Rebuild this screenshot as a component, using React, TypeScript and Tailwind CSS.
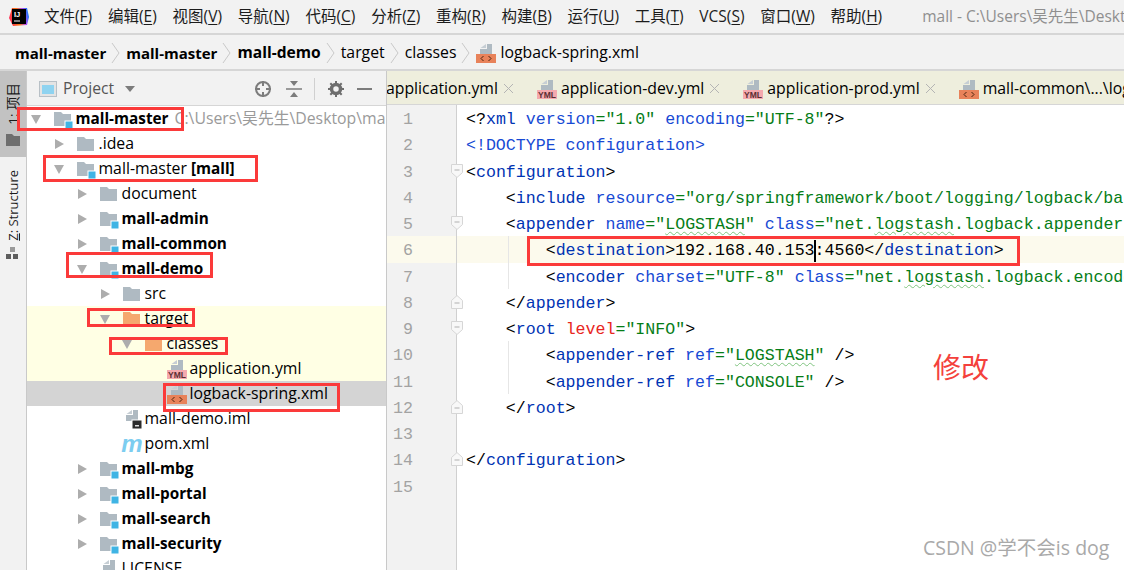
import type { ReactNode } from "react";

const ui = "font-['Open_Sans','Noto_Sans_CJK_SC',sans-serif]";
const mono = "font-['Liberation_Mono',monospace]";

const menus = [
  ["文件", "F"],
  ["编辑", "E"],
  ["视图", "V"],
  ["导航", "N"],
  ["代码", "C"],
  ["分析", "Z"],
  ["重构", "R"],
  ["构建", "B"],
  ["运行", "U"],
  ["工具", "T"],
  ["VCS", "S"],
  ["窗口", "W"],
  ["帮助", "H"],
];

const Chevron = () => (
  <svg width="10" height="22" viewBox="0 0 10 22" className="mx-[5px]">
    <path d="M1 1l7 10-7 10" fill="none" stroke="#c9c9c9" />
  </svg>
);

const Folder = ({ color = "#afbac2", module }: { color?: string; module?: boolean }) => (
  <svg width="20" height="20" viewBox="0 0 20 20">
    <path d="M1 3h7l2 2h8v12H1z" fill={color} />
    {module && <rect x="12" y="12" width="8" height="8" fill="#3fb4e4" stroke="#fff" />}
  </svg>
);

const FileBase = ({ children }: { children?: ReactNode }) => (
  <svg width="20" height="20" viewBox="0 0 20 20">
    <path d="M11 1h5v11H4V6h7z" fill="#afbac2" />
    <path d="M4.5 5l5.5-4v4z" fill="#c6ced4" />
    {children}
  </svg>
);

const YmlIcon = () => (
  <FileBase>
    <rect x="0" y="11" width="20" height="9" fill="#f4a9ae" />
    <text x="10" y="18.7" textAnchor="middle" fontSize="8.5" fontWeight="700" fontFamily="Liberation Sans" fill="#5c2f33">
      YML
    </text>
  </FileBase>
);

const XmlIcon = () => (
  <FileBase>
    <rect x="0" y="11" width="20" height="9" fill="#e8825a" />
    <path d="M7.5 13l-2.5 2.5 2.5 2.5M12.5 13l2.5 2.5-2.5 2.5" fill="none" stroke="#4a2410" />
  </FileBase>
);

const ImlIcon = () => (
  <FileBase>
    <rect x="10" y="11" width="10" height="9" fill="#2b2b2b" stroke="#fff" />
    <rect x="13" y="16" width="4" height="1.5" fill="#ddd" />
  </FileBase>
);

const PomIcon = () => (
  <span className="flex h-5 w-5 items-center justify-center font-['Liberation_Sans',sans-serif] text-[24px] font-bold italic leading-none text-[#7ccdf0]">
    m
  </span>
);

const Arrow = ({ open }: { open?: boolean }) => (
  <svg width="12" height="12" viewBox="0 0 12 12">
    <path d={open ? "M1 2h10l-5 9z" : "M2 1l9 5-9 5z"} fill="#adadad" />
  </svg>
);

const CloseX = () => (
  <svg width="11" height="11" viewBox="0 0 11 11" className="ml-[5px] shrink-0">
    <path d="M1 1l9 9M10 1l-9 9" stroke="#b4b4b4" />
  </svg>
);

type Row = {
  depth: number;
  icon: ReactNode;
  label: string;
  bold?: boolean;
  open?: boolean;
  leaf?: boolean;
  extra?: ReactNode;
  bg?: string;
};

const mod = <Folder module />;

const rows: Row[] = [
  {
    depth: 0,
    icon: mod,
    label: "mall-master",
    bold: true,
    open: true,
    extra: <span className="ml-[6px] text-[#9a9a9a]">C:\Users\吴先生\Desktop\mall</span>,
  },
  { depth: 1, icon: <Folder />, label: ".idea" },
  {
    depth: 1,
    icon: mod,
    label: "mall-master ",
    open: true,
    extra: <span className="text-[15.3px] font-bold">[mall]</span>,
  },
  { depth: 2, icon: <Folder />, label: "document" },
  { depth: 2, icon: mod, label: "mall-admin", bold: true },
  { depth: 2, icon: mod, label: "mall-common", bold: true },
  { depth: 2, icon: mod, label: "mall-demo", bold: true, open: true },
  { depth: 3, icon: <Folder />, label: "src" },
  { depth: 3, icon: <Folder color="#f5a86e" />, label: "target", open: true, bg: "bg-[#ffffe4]" },
  { depth: 4, icon: <Folder color="#f5a86e" />, label: "classes", open: true, bg: "bg-[#ffffe4]" },
  { depth: 5, icon: <YmlIcon />, label: "application.yml", leaf: true, bg: "bg-[#ffffe4]" },
  { depth: 5, icon: <XmlIcon />, label: "logback-spring.xml", leaf: true, bg: "bg-[#d4d4d4]" },
  { depth: 3, icon: <ImlIcon />, label: "mall-demo.iml", leaf: true },
  { depth: 3, icon: <PomIcon />, label: "pom.xml", leaf: true },
  { depth: 2, icon: mod, label: "mall-mbg", bold: true },
  { depth: 2, icon: mod, label: "mall-portal", bold: true },
  { depth: 2, icon: mod, label: "mall-search", bold: true },
  { depth: 2, icon: mod, label: "mall-security", bold: true },
  { depth: 2, icon: <FileBase />, label: "LICENSE", leaf: true },
];

const depthPad = ["pl-[3px]", "pl-[26px]", "pl-[49px]", "pl-[72px]", "pl-[94px]", "pl-[117px]"];

const TreeRow = ({ row }: { row: Row }) => (
  <div className={`flex h-[25px] shrink-0 items-center whitespace-pre text-[15.8px] text-black ${depthPad[row.depth]} ${row.bg ?? ""}`}>
    <span className={`flex w-[23px] shrink-0 justify-start ${row.leaf ? "invisible" : ""}`}>
      <Arrow open={row.open} />
    </span>
    <span className="mr-[2.5px] flex w-[20px] shrink-0 justify-center">{row.icon}</span>
    <span className={row.bold ? "text-[15.3px] font-bold" : ""}>{row.label}</span>
    {row.extra}
  </div>
);

const tabs: { label: string; icon?: ReactNode }[] = [
  { label: "application.yml" },
  { label: "application-dev.yml", icon: <YmlIcon /> },
  { label: "application-prod.yml", icon: <YmlIcon /> },
  { label: "mall-common\\...\\logback-spring.xml", icon: <XmlIcon /> },
];

const tag = "text-[#0033b3]";
const k = "text-[#174ad4]"; // attribute names
const s = "text-[#067d17]"; // attribute values

const T = ({ c, children }: { c?: string; children: ReactNode }) => <span className={c}>{children}</span>;

const Wavy = ({ children }: { children: ReactNode }) => (
  <span className="underline decoration-[#7fc47f] decoration-wavy decoration-1 underline-offset-2">{children}</span>
);

const code: { node?: ReactNode; fold?: "open" | "close"; active?: boolean; guide?: boolean }[] = [
  {
    node: (
      <>
        &lt;?<T c={tag}>xml</T> <T c={k}>version</T>
        <T c={s}>="1.0"</T> <T c={k}>encoding</T>
        <T c={s}>="UTF-8"</T>?&gt;
      </>
    ),
  },
  {
    node: (
      <>
        <T c={k}>&lt;!DOCTYPE configuration&gt;</T>
      </>
    ),
  },
  { fold: "open", node: <>&lt;<T c={tag}>configuration</T>&gt;</> },
  {
    node: (
      <>
        {"    "}&lt;<T c={tag}>include</T> <T c={k}>resource</T>
        <T c={s}>="org/springframework/boot/logging/logback/base.xml"</T>
      </>
    ),
  },
  {
    fold: "open",
    node: (
      <>
        {"    "}&lt;<T c={tag}>appender</T> <T c={k}>name</T>
        <T c={s}>
          ="<Wavy>LOGSTASH</Wavy>"
        </T>{" "}
        <T c={k}>class</T>
        <T c={s}>
          ="net.<Wavy>logstash</Wavy>.logback.appender.LogstashTcpSocketAppender"
        </T>
      </>
    ),
  },
  {
    active: true,
    guide: true,
    node: (
      <>
        {"        "}&lt;<T c={tag}>destination</T>&gt;192.168.40.153
        <span className="relative">
          <span className="absolute -left-px top-[-1px] h-[22px] w-[2px] bg-black" />
        </span>
        :4560&lt;/<T c={tag}>destination</T>&gt;
      </>
    ),
  },
  {
    guide: true,
    node: (
      <>
        {"        "}&lt;<T c={tag}>encoder</T> <T c={k}>charset</T>
        <T c={s}>="UTF-8"</T> <T c={k}>class</T>
        <T c={s}>
          ="net.<Wavy>logstash</Wavy>.logback.encoder.LogstashEncoder"
        </T>
      </>
    ),
  },
  { fold: "close", node: <>{"    "}&lt;/<T c={tag}>appender</T>&gt;</> },
  {
    fold: "open",
    node: (
      <>
        {"    "}&lt;<T c={tag}>root</T> <T c="text-[#e8261e]">level</T>
        <T c={s}>="INFO"</T>&gt;
      </>
    ),
  },
  {
    guide: true,
    node: (
      <>
        {"        "}&lt;<T c={tag}>appender-ref</T> <T c={k}>ref</T>
        <T c={s}>
          ="<Wavy>LOGSTASH</Wavy>"
        </T>{" "}
        /&gt;
      </>
    ),
  },
  {
    guide: true,
    node: (
      <>
        {"        "}&lt;<T c={tag}>appender-ref</T> <T c={k}>ref</T>
        <T c={s}>="CONSOLE"</T> /&gt;
      </>
    ),
  },
  { fold: "close", node: <>{"    "}&lt;/<T c={tag}>root</T>&gt;</> },
  {},
  { fold: "close", node: <>&lt;/<T c={tag}>configuration</T>&gt;</> },
  {},
];

const Fold = ({ dir }: { dir: "open" | "close" }) => (
  <svg width="12" height="14" viewBox="0 0 12 14" className="absolute -right-[7px] top-[6px]">
    <path d={dir === "open" ? "M.5.5h11v8l-5.5 5-5.5-5z" : "M.5 13.5h11v-8l-5.5-5-5.5 5z"} fill="#f8f8f8" stroke="#d6d6d6" />
    <path d={dir === "open" ? "M3.5 6h5" : "M3.5 8h5"} stroke="#b0b0b0" />
  </svg>
);

const boxes = [
  "left-[17px] top-[107px] h-[24px] w-[167px]",
  "left-[43px] top-[155px] h-[27px] w-[215px]",
  "left-[66px] top-[252px] h-[26px] w-[147px]",
  "left-[87px] top-[308px] h-[19px] w-[108px]",
  "left-[109px] top-[337px] h-[18px] w-[119px]",
  "left-[163px] top-[383px] h-[29px] w-[177px]",
  "left-[527px] top-[236px] h-[30px] w-[493px]",
];

export default function App() {
  return (
    <div className={`relative flex h-[570px] w-[1124px] flex-col overflow-hidden bg-white ${ui}`}>
      {/* menu bar */}
      <div className="flex h-[35px] shrink-0 items-center border-b-2 border-[#d6d6d6] bg-[#f2f2f2] text-[15.5px] text-[#1c1c1c]">
        <svg width="20" height="19" viewBox="0 0 20 19" className="ml-[9px] mr-[15px] shrink-0">
          <defs>
            <linearGradient id="logo" x1="0" y1="0.6" x2="1" y2="0.4">
              <stop offset="0" stopColor="#fe2857" />
              <stop offset="0.45" stopColor="#f97a12" />
              <stop offset="0.75" stopColor="#b74af7" />
              <stop offset="1" stopColor="#087cfa" />
            </linearGradient>
          </defs>
          <path d="M3 1l15 0 2 9-2 8-14 1-4-8z" fill="url(#logo)" />
          <rect x="3" y="2" width="14" height="15" fill="#000" />
          <text x="5" y="10" fontSize="7.5" fontWeight="700" fontFamily="Liberation Sans" fill="#fff">
            IJ
          </text>
          <rect x="5" y="13.5" width="6" height="1" fill="#fff" />
        </svg>
        <div className="flex gap-[15.8px] whitespace-nowrap">
          {menus.map(([name, key]) => (
            <span key={key}>
              {name}(<span className="underline underline-offset-2">{key}</span>)
            </span>
          ))}
        </div>
        <span className="ml-[40px] whitespace-nowrap text-[#8f8f8f]">mall - C:\Users\吴先生\Desktop\mall</span>
      </div>

      {/* breadcrumb */}
      <div className="flex h-[36px] shrink-0 items-center whitespace-nowrap border-b-2 border-[#d6d6d6] bg-[#f2f2f2] pl-[15px] pt-[2px] text-[15.8px] text-black">
        <span className="text-[15px] font-bold">mall-master</span>
        <Chevron />
        <span className="text-[15px] font-bold">mall-master</span>
        <Chevron />
        <span className="text-[15.6px] font-bold">mall-demo</span>
        <Chevron />
        <span>target</span>
        <Chevron />
        <span>classes</span>
        <Chevron />
        <span className="flex">
          <XmlIcon />
        </span>
        <span className="ml-[4px]">logback-spring.xml</span>
      </div>

      <div className="flex min-h-0 flex-1">
        {/* left tool strip */}
        <div className="flex w-[27px] shrink-0 flex-col items-center border-r border-[#c9c9c9] bg-[#f2f2f2] text-[#1c1c1c]">
          <div className="flex h-[86px] w-full shrink-0 flex-col items-center bg-[#c2c2c2]">
            <span className="mt-[12px] rotate-180 whitespace-nowrap text-[13.5px] leading-[26px] [text-orientation:sideways] [writing-mode:vertical-rl]">
              <span className="underline">1</span>: 项目
            </span>
            <svg width="16" height="14" viewBox="0 0 16 14" className="mt-[8px]">
              <path d="M1 1h6l2 2h6v10H1z" fill="#6e6e6e" />
            </svg>
          </div>
          <span className="mt-[13px] rotate-180 whitespace-nowrap text-[13px] leading-[26px] [text-orientation:sideways] [writing-mode:vertical-rl]">
            <span className="underline">Z</span>: Structure
          </span>
          <svg width="14" height="13" viewBox="0 0 14 13" className="mt-[6px]">
            <rect x="4" y="0" width="5" height="5" fill="#9a9a9a" />
            <rect x="0" y="7" width="5" height="5" fill="#5e5e5e" />
            <rect x="7" y="7" width="5" height="5" fill="#5e5e5e" />
          </svg>
        </div>

        {/* project tree */}
        <div className="flex w-[360px] shrink-0 flex-col overflow-hidden border-r border-[#c9c9c9]">
          <div className="flex h-[35px] shrink-0 items-center border-b border-[#d6d6d6] bg-[#f2f2f2] pt-[1px] text-[15.7px] text-[#555]">
            <svg width="18" height="18" viewBox="0 0 18 18" className="ml-[12px]">
              <rect x="0.5" y="1.5" width="17" height="15" fill="#e4e4e4" stroke="#b8c0c6" />
              <rect x="3" y="5" width="12" height="9" fill="#8fd3f0" />
            </svg>
            <span className="ml-[6px]">Project</span>
            <svg width="12" height="8" viewBox="0 0 12 8" className="ml-[10px]">
              <path d="M1 1h10l-5 6z" fill="#7c7c7c" />
            </svg>
            <svg width="18" height="18" viewBox="0 0 18 18" className="ml-[118px]">
              <circle cx="9" cy="9" r="7" fill="none" stroke="#7c7c7c" strokeWidth="2" />
              <path d="M9 1v5M9 12v5M1 9h5M12 9h5" stroke="#7c7c7c" strokeWidth="2" />
            </svg>
            <svg width="16" height="16" viewBox="0 0 16 16" className="ml-[14px]">
              <path d="M0 8h16" stroke="#7c7c7c" strokeWidth="1.5" />
              <path d="M4 0h8L8 5zM4 16h8l-4-5z" fill="#7c7c7c" />
            </svg>
            <span className="ml-[12px] h-[22px] w-px bg-[#d0d0d0]" />
            <svg width="16" height="16" viewBox="0 0 16 16" className="ml-[13px]">
              <circle cx="8" cy="8" r="4.5" fill="none" stroke="#6e6e6e" strokeWidth="3.5" />
              <path d="M8 0v3M8 13v3M0 8h3M13 8h3M2.3 2.3l2 2M11.7 11.7l2 2M13.7 2.3l-2 2M4.3 11.7l-2 2" stroke="#6e6e6e" strokeWidth="2" />
            </svg>
            <span className="ml-[13px] h-[2px] w-[15px] bg-[#7c7c7c]" />
          </div>
          {rows.map((row, i) => (
            <TreeRow key={i} row={row} />
          ))}
        </div>

        {/* editor */}
        <div className="flex min-w-0 flex-1 flex-col overflow-hidden">
          <div className="flex h-[34px] shrink-0 items-center whitespace-nowrap border-b border-[#d6d6d6] bg-[#eeeedd] pt-[2px] text-[15.8px] text-black">
            {tabs.map((tab) => (
              <div key={tab.label} className="flex shrink-0 items-center pr-[10px]">
                {tab.icon && <span className="ml-[13px] mr-[4px] flex">{tab.icon}</span>}
                <span className={tab.icon ? "" : "-ml-px"}>{tab.label}</span>
                <CloseX />
              </div>
            ))}
          </div>
          <div className={`relative flex-1 text-[16.6px] text-black ${mono}`}>
            {code.map((line, i) => (
              <div key={i} className={`relative flex h-[26.25px] whitespace-pre leading-[30px] ${line.active ? "bg-[#fcfaed]" : ""}`}>
                <div className={`relative w-[70px] shrink-0 border-r border-[#d0d0d0] pr-[43px] text-right text-[#a3a3a3] ${line.active ? "bg-[#fcfaed]" : "bg-[#f2f2f2]"}`}>
                  {i + 1}
                  {line.fold && <Fold dir={line.fold} />}
                </div>
                {line.guide && <span className="absolute left-[121px] top-0 h-full w-px bg-[#e6e6e6]" />}
                <div className="pl-[9px]">{line.node}</div>
              </div>
            ))}
            <div className="h-[90px] w-[70px] border-r border-[#d0d0d0] bg-[#f2f2f2]" />
          </div>
        </div>
      </div>

      {/* annotations over the screenshot */}
      {boxes.map((b) => (
        <div key={b} className={`absolute border-[3px] border-[#fb3a3a] ${b}`} />
      ))}
      <span className="absolute left-[933px] top-[352px] font-['Noto_Sans_CJK_SC',sans-serif] text-[28px] leading-none text-[#f4413c]">修改</span>
      <span className="absolute left-[923px] top-[538px] text-[19.5px] leading-none text-[#a9a9a9]">CSDN @学不会is dog</span>
    </div>
  );
}
